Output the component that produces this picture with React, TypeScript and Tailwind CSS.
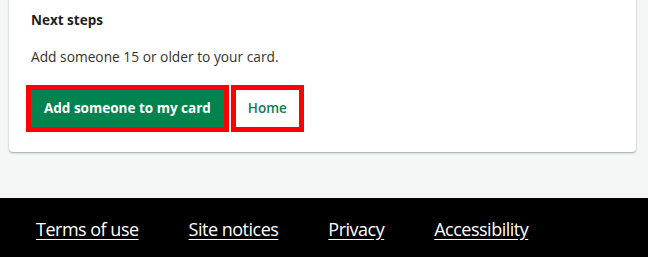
import React from 'react';

const footerLinks = ['Terms of use', 'Site notices', 'Privacy', 'Accessibility'];

export default function App() {
  return (
    <div className="min-h-screen bg-[#f3f8f6] font-['Open_Sans',sans-serif] text-[#1f1f1f]">
      <main className="pl-[9px] pr-[12px] pb-[46px]">
        {/* Card */}
        <div className="-mt-2 rounded bg-white pl-[22px] pt-[19px] pb-[25px] shadow-[0_1px_2px_rgba(0,0,0,0.35)]">
          <h3 className="text-[13.5px] font-bold leading-[18px]">Next steps</h3>
          <p className="mt-[19px] text-[13.75px] leading-[18px] text-[#323232]">Add someone 15 or older to your card.</p>
          <div className="mt-[24px] flex gap-[12px]">
            <button className="h-[37px] bg-[#00844f] px-[13px] text-[13.5px] font-bold text-white outline-[5px] outline-solid outline-[#ff0000]">
              Add someone to my card
            </button>
            <button className="h-[37px] bg-white px-[12px] text-[13.5px] font-semibold text-[#17775a] outline-[5px] outline-solid outline-[#ff0000]">
              Home
            </button>
          </div>
        </div>
      </main>

      <footer className="bg-black px-[36px] pt-[19px] pb-[20px]">
        <ul className="flex gap-[50px]">
          {footerLinks.map((link) => (
            <li key={link}>
              <a href="#" className="text-[18px] leading-[24px] tracking-[-0.5px] text-white underline underline-offset-[3px]">
                {link}
              </a>
            </li>
          ))}
        </ul>
      </footer>
    </div>
  );
}
